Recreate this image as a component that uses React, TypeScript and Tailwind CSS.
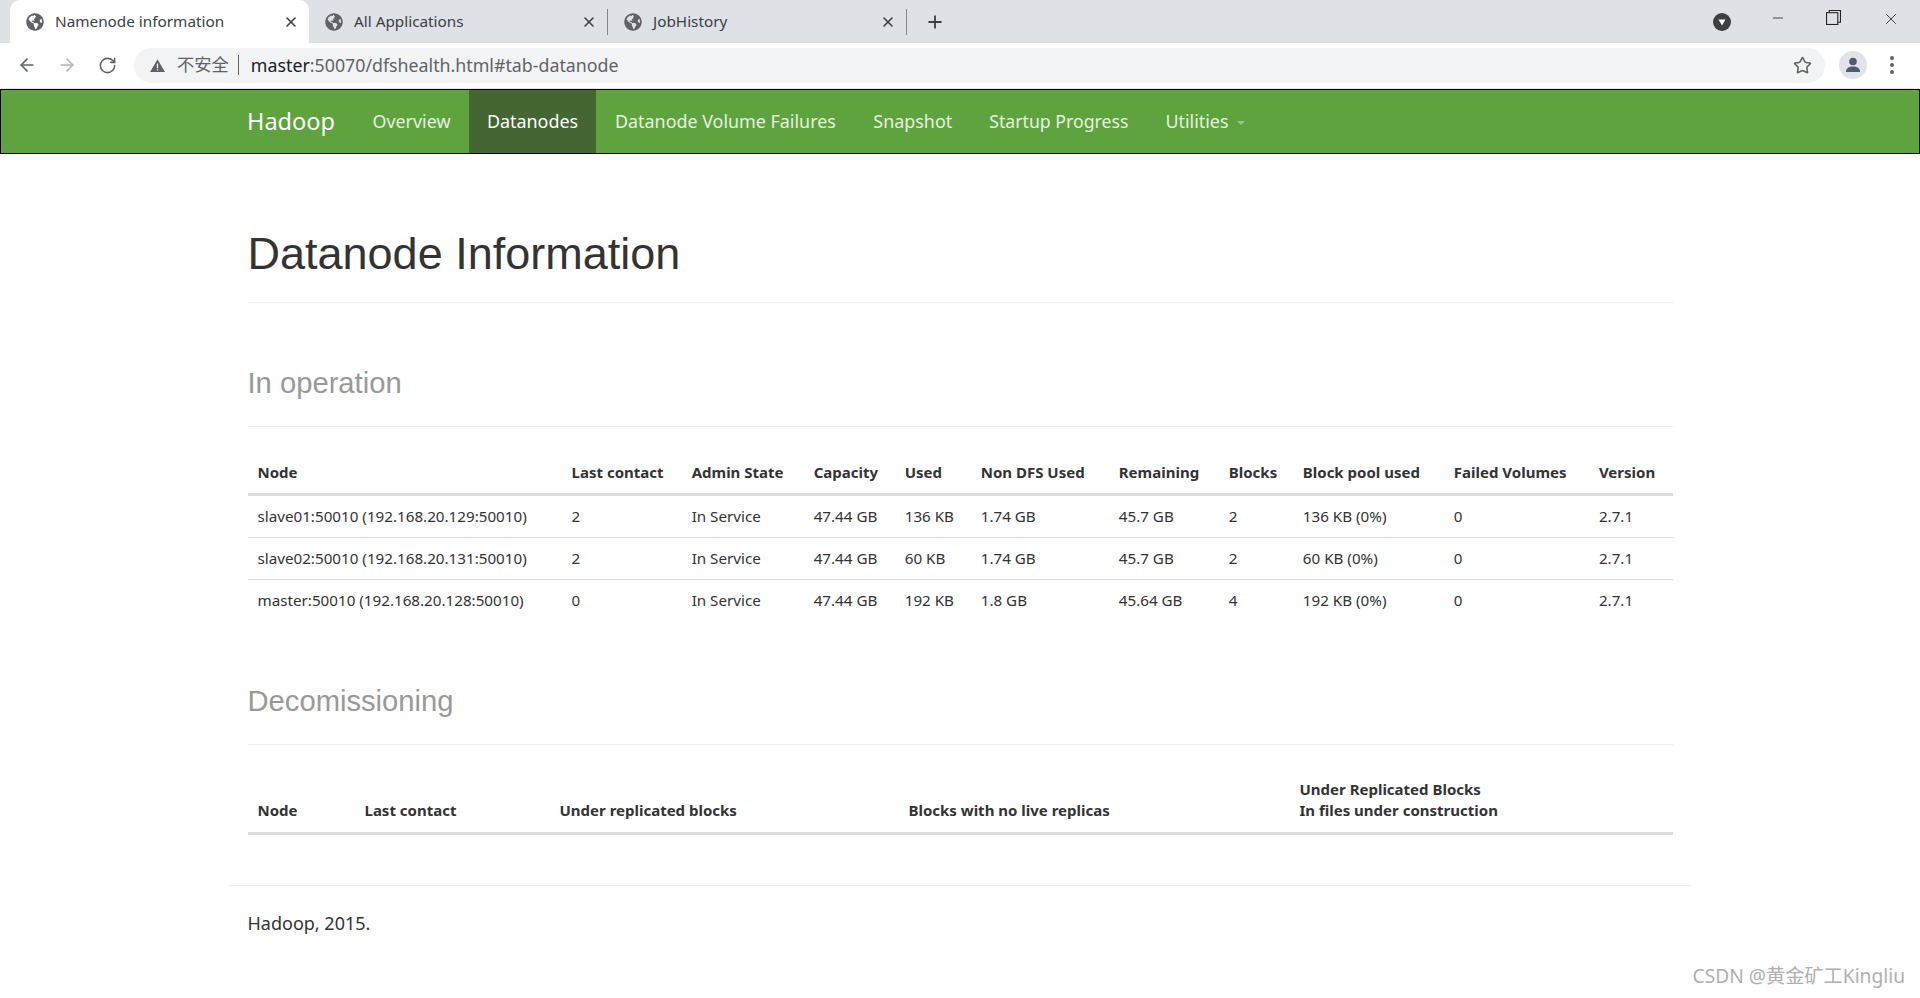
import { FaGlobeAmericas } from "react-icons/fa";
import { ArrowLeft, ArrowRight, RotateCw, Star, Plus, X, Minus } from "lucide-react";

const nodes = [
  ["slave01:50010 (192.168.20.129:50010)", "2", "In Service", "47.44 GB", "136 KB", "1.74 GB", "45.7 GB", "2", "136 KB (0%)", "0", "2.7.1"],
  ["slave02:50010 (192.168.20.131:50010)", "2", "In Service", "47.44 GB", "60 KB", "1.74 GB", "45.7 GB", "2", "60 KB (0%)", "0", "2.7.1"],
  ["master:50010 (192.168.20.128:50010)", "0", "In Service", "47.44 GB", "192 KB", "1.8 GB", "45.64 GB", "4", "192 KB (0%)", "0", "2.7.1"],
];
const heads = ["Node", "Last contact", "Admin State", "Capacity", "Used", "Non DFS Used", "Remaining", "Blocks", "Block pool used", "Failed Volumes", "Version"];
const widths = ["w-[314px]", "w-[120px]", "w-[122px]", "w-[91px]", "w-[76px]", "w-[138px]", "w-[110px]", "w-[74px]", "w-[151px]", "w-[145px]", "w-[84px]"];

function Tab({ title, active, sep }: { title: string; active?: boolean; sep?: boolean }) {
  return (
    <div className={`relative flex h-[43px] w-[299px] items-center pl-[16px] ${active ? "rounded-t-[10px] bg-white" : ""}`}>
      <FaGlobeAmericas className="h-[18px] w-[18px] shrink-0 text-[#5f6368]" />
      <span className="ml-[11px] text-[15.3px] text-[#3c4043]">{title}</span>
      <X className="ml-auto mr-[10px] h-[16px] w-[16px] text-[#3c4043]" strokeWidth={2.4} />
      {sep && <span className="h-[26px] w-px bg-[#80868b]" />}
    </div>
  );
}

export default function App() {
  return (
    <div className="relative h-[998px] w-[1920px] overflow-hidden bg-white font-['Noto_Sans','Noto_Sans_CJK_SC',sans-serif] text-[#333]">
      <div className="flex h-[43px] items-center bg-[#dee1e6] pl-[10px]">
        <Tab title="Namenode information" active />
        <Tab title="All Applications" sep />
        <Tab title="JobHistory" sep />
        <Plus className="ml-[18px] h-[20px] w-[20px] text-[#3c4043]" strokeWidth={2.2} />
        <div className="ml-auto flex items-center pr-[20px]">
          <span className="flex h-[18px] w-[18px] items-center justify-center rounded-full bg-[#3c4043]">
            <svg viewBox="0 0 10 10" className="h-[10px] w-[10px]"><path d="M1.5 2.5h7L5 8.5z" fill="#fff" /></svg>
          </span>
          <Minus className="mb-[8px] ml-[39px] h-[16px] w-[16px] text-[#222]" strokeWidth={1.2} />
          <svg viewBox="0 0 14 14" className="mb-[8px] ml-[40px] h-[15px] w-[15px]" fill="none" stroke="#222" strokeWidth="1">
            <rect x="0.5" y="2.5" width="10.5" height="11" />
            <path d="M3 2.5V0.5h10.5v11H11" />
          </svg>
          <X className="mb-[6px] ml-[41px] h-[18px] w-[18px] text-[#222]" strokeWidth={1.1} />
        </div>
      </div>

      <div className="flex h-[46px] items-center border-b border-[#e3e4e6] bg-white pb-[1px]">
        <ArrowLeft className="ml-[17px] h-[20px] w-[20px] text-[#5f6368]" strokeWidth={2} />
        <ArrowRight className="ml-[20px] h-[20px] w-[20px] text-[#b4b7bb]" strokeWidth={2} />
        <RotateCw className="ml-[21px] h-[19px] w-[19px] text-[#5f6368]" strokeWidth={2} />
        <div className="ml-[17px] flex h-[35px] w-[1691px] items-center rounded-full bg-[#f1f3f4]">
          <svg viewBox="0 0 16 16" className="ml-[15px] h-[17px] w-[17px] shrink-0"><path d="M8 2 15 14H1z" fill="#5f6368" /><path d="M8 6v4.5M8 11.5v1.2" stroke="#f1f3f4" strokeWidth="1.2" /></svg>
          <span className="ml-[11px] text-[17.3px] text-[#5f6368]">不安全</span>
          <span className="ml-[9px] h-[20px] w-px bg-[#5f6368]" />
          <span className="ml-[12px] text-[17.8px] text-[#5f6368]"><span className="text-[#202124]">master</span>:50070/dfshealth.html#tab-datanode</span>
          <Star className="ml-auto mr-[13px] h-[19px] w-[19px] text-[#5f6368]" strokeWidth={2} />
        </div>
        <span className="ml-[14px] flex h-[28px] w-[28px] items-center justify-center overflow-hidden rounded-full bg-[#e0e3e9]">
          <svg viewBox="0 0 20 20" className="h-[20px] w-[20px]" fill="#4d5b73"><circle cx="10" cy="6.5" r="3.8" /><path d="M3 17c0-4 3-5.500 7-5.500s7 1.500 7 5.500z" /></svg>
        </span>
        <svg viewBox="0 0 4 18" className="ml-[23px] h-[18px] w-[4px]" fill="#5f6368"><circle cx="2" cy="2" r="2" /><circle cx="2" cy="9" r="2" /><circle cx="2" cy="16" r="2" /></svg>
      </div>

      <nav className="flex h-[65px] items-stretch border border-black bg-[#5fa33e] pl-[246px] text-[17.9px] text-[#e6f0e0]">
        <span className="flex items-center pr-[19px] text-[23.5px] text-white">Hadoop</span>
        <span className="flex items-center px-[18.5px]">Overview</span>
        <span className="flex w-[127px] items-center justify-center bg-[#436633] text-white">Datanodes</span>
        <span className="flex items-center px-[19px]">Datanode Volume Failures</span>
        <span className="flex items-center px-[18.5px]">Snapshot</span>
        <span className="flex items-center px-[18.5px] text-[17.7px]">Startup Progress</span>
        <span className="flex items-center px-[18.5px]">Utilities<span className="ml-[8px] mt-[3px] border-x-[4px] border-t-[4px] border-x-transparent border-t-[#9cc58a]" /></span>
      </nav>

      <main className="ml-[247.5px] w-[1425.5px]">
        <div className="mt-[71px] h-[78px] border-b border-[#eee] font-['Liberation_Sans',Arial,sans-serif] text-[45px] leading-[58px]">Datanode Information</div>
        <h2 className="mt-[60px] h-[64px] border-b border-[#eee] font-['Liberation_Sans',Arial,sans-serif] text-[29.200px] leading-[40px] text-[#999]">In operation</h2>
        <table className="mt-[25px] w-full table-fixed border-separate border-spacing-0 text-[15.2px]">
          <colgroup>{widths.map((w, i) => <col key={i} className={w} />)}</colgroup>
          <thead>
            <tr>{heads.map((h) => <th key={h} className="h-[44px] border-b-[3px] border-[#ddd] pl-[10px] text-left text-[15px] font-bold whitespace-nowrap">{h}</th>)}</tr>
          </thead>
          <tbody>
            {nodes.map((r, i) => (
              <tr key={i}>{r.map((c, j) => <td key={j} className={`pl-[10px] whitespace-nowrap ${i < 2 ? "h-[42px] border-b border-[#ddd]" : "h-[41px]"}`}>{c}</td>)}</tr>
            ))}
          </tbody>
        </table>
        <h2 className="mt-[59px] h-[65px] border-b border-[#eee] font-['Liberation_Sans',Arial,sans-serif] text-[29.200px] leading-[42px] text-[#999]">Decomissioning</h2>
        <table className="mt-[34px] w-full table-fixed border-separate border-spacing-0 text-[15px]">
          <colgroup>
            <col className="w-[107px]" /><col className="w-[195px]" /><col className="w-[349px]" /><col className="w-[391px]" /><col />
          </colgroup>
          <thead>
            <tr>
              {["Node", "Last contact", "Under replicated blocks", "Blocks with no live replicas"].map((h) => (
                <th key={h} className="border-b-[3px] border-[#ddd] pb-[11px] pl-[10px] text-left align-bottom font-bold">{h}</th>
              ))}
              <th className="border-b-[3px] border-[#ddd] pb-[11px] pl-[10px] text-left align-bottom font-bold leading-[21px]">Under Replicated Blocks<br />In files under construction</th>
            </tr>
          </thead>
        </table>
      </main>
      <div className="ml-[229px] mt-[50px] w-[1462px] border-t border-[#eee] pl-[18.500px] pt-[24px] text-[18px]">Hadoop, 2015.</div>
      <span className="absolute bottom-[7px] right-[15px] text-[19.2px] text-[#b0b0b0]">CSDN @黄金矿工Kingliu</span>
    </div>
  );
}
